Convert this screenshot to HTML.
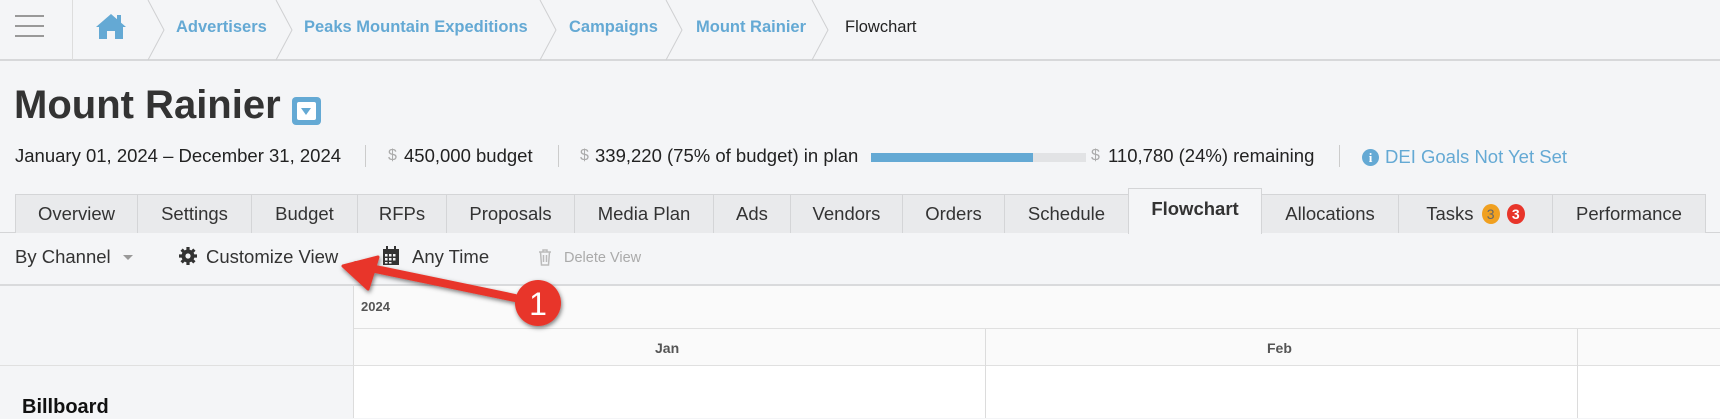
<!DOCTYPE html>
<html><head><meta charset="utf-8"><style>
*{margin:0;padding:0;box-sizing:border-box}
body{width:1720px;height:418px;overflow:hidden;background:#f4f5f7;font-family:"Liberation Sans",sans-serif;color:#333;position:relative}
.a{position:absolute;white-space:nowrap}
.bc{font-size:16.5px;font-weight:bold;color:#64a9d4;top:18px}
.tab{position:absolute;top:194px;height:39px;background:#e9eaec;border:1px solid #d4d5d7;border-bottom:none;font-size:18.5px;color:#333;text-align:center;line-height:38px}
.i{font-size:18.5px;color:#222;top:145px}
</style></head><body>
<div class="a" style="left:0;top:0;width:1720px;height:61px;border-bottom:2px solid #d7d8da"></div>
<div class="a" style="left:15px;top:15px;width:29px;height:2px;background:#999"></div>
<div class="a" style="left:15px;top:25px;width:29px;height:2px;background:#999"></div>
<div class="a" style="left:15px;top:35px;width:29px;height:2px;background:#999"></div>
<div class="a" style="left:72px;top:0;width:1px;height:60px;background:#ddd"></div>
<svg class="a" style="left:95px;top:12px" width="32" height="28" viewBox="0 0 32 28"><path d="M16 2 L1 15 L4 15 L4 27 L12 27 L12 19 L20 19 L20 27 L28 27 L28 15 L31 15 Z" fill="#64a9d4"/><rect x="22" y="3" width="4" height="8" fill="#64a9d4"/></svg>
<svg class="a" style="left:0;top:0" width="900" height="61">
<g fill="none" stroke="#cfd0d2" stroke-width="1">
<path d="M148 0 L164 30 L148 60"/><path d="M276 0 L292 30 L276 60"/><path d="M540 0 L556 30 L540 60"/><path d="M666 0 L682 30 L666 60"/><path d="M812 0 L828 30 L812 60"/>
</g></svg>
<div class="a bc" style="left:176px">Advertisers</div>
<div class="a bc" style="left:304px">Peaks Mountain Expeditions</div>
<div class="a bc" style="left:569px">Campaigns</div>
<div class="a bc" style="left:696px">Mount Rainier</div>
<div class="a" style="left:845px;top:18px;font-size:16.5px;color:#222">Flowchart</div>
<div class="a" style="left:14px;top:83px;font-size:40px;font-weight:bold;color:#333">Mount Rainier</div>
<div class="a" style="left:292px;top:97px;width:29px;height:28px;background:#64a9d4;border-radius:4px"><div style="position:absolute;left:5px;top:5px;width:19px;height:18px;background:#fff;border-radius:2px"></div><div style="position:absolute;left:9px;top:11px;border-left:5.5px solid transparent;border-right:5.5px solid transparent;border-top:7px solid #64a9d4"></div></div>
<div class="a i" style="left:15px">January 01, 2024 – December 31, 2024</div>
<div class="a" style="left:365px;top:145px;width:1px;height:22px;background:#ccc"></div>
<div class="a" style="left:388px;top:147px;font-size:16px;color:#aaa">$</div>
<div class="a i" style="left:404px">450,000 budget</div>
<div class="a" style="left:558px;top:145px;width:1px;height:22px;background:#ccc"></div>
<div class="a" style="left:580px;top:147px;font-size:16px;color:#aaa">$</div>
<div class="a i" style="left:595px">339,220 (75% of budget) in plan</div>
<div class="a" style="left:871px;top:153px;width:215px;height:9px;background:#e2e3e5"><div style="width:162px;height:9px;background:#64a9d4"></div></div>
<div class="a" style="left:1091px;top:147px;font-size:16px;color:#aaa">$</div>
<div class="a i" style="left:1108px">110,780 (24%) remaining</div>
<div class="a" style="left:1339px;top:145px;width:1px;height:22px;background:#ccc"></div>
<div class="a" style="left:1362px;top:149px;width:17px;height:17px;border-radius:50%;background:#64a9d4;color:#fff;font-size:13px;font-weight:bold;text-align:center;line-height:17px;font-family:'Liberation Serif',serif">i</div>
<div class="a i" style="left:1385px;color:#64a9d4;top:146px">DEI Goals Not Yet Set</div>
<div class="a" style="left:0;top:232px;width:1720px;height:1px;background:#d4d5d7"></div>
<div class="tab" style="left:15px;width:123px">Overview</div>
<div class="tab" style="left:137px;width:115px">Settings</div>
<div class="tab" style="left:251px;width:107px">Budget</div>
<div class="tab" style="left:357px;width:90px">RFPs</div>
<div class="tab" style="left:446px;width:129px">Proposals</div>
<div class="tab" style="left:574px;width:140px">Media Plan</div>
<div class="tab" style="left:713px;width:78px">Ads</div>
<div class="tab" style="left:790px;width:113px">Vendors</div>
<div class="tab" style="left:902px;width:103px">Orders</div>
<div class="tab" style="left:1004px;width:125px">Schedule</div>
<div class="tab" style="left:1128px;top:188px;height:46px;width:134px;background:#f4f5f7;font-weight:bold;line-height:40px">Flowchart</div>
<div class="tab" style="left:1261px;width:138px">Allocations</div>
<div class="tab" style="left:1398px;width:155px">Tasks <span style="display:inline-block;width:18px;height:20px;border-radius:50%;background:#f0a020;color:#666;font-size:14px;line-height:20px;vertical-align:1px;margin-left:3px">3</span> <span style="display:inline-block;width:18px;height:20px;border-radius:50%;background:#e8352a;color:#fff;font-size:14px;font-weight:bold;line-height:20px;vertical-align:1px;margin-left:2px">3</span></div>
<div class="tab" style="left:1552px;width:154px">Performance</div>
<div class="a" style="left:15px;top:246px;font-size:18.5px;color:#333">By Channel</div>
<div class="a" style="left:123px;top:255px;border-left:5px solid transparent;border-right:5px solid transparent;border-top:5px solid #999"></div>
<svg class="a" style="left:178px;top:246px" width="20" height="20" viewBox="0 0 20 20"><g fill="#333"><circle cx="10" cy="10" r="6.5"/><g stroke="#333" stroke-width="3.2"><path d="M10 1v18M1 10h18M3.6 3.6l12.8 12.8M16.4 3.6L3.6 16.4"/></g></g><circle cx="10" cy="10" r="2.6" fill="#f4f5f7"/></svg>
<div class="a" style="left:206px;top:246px;font-size:18.5px;color:#333">Customize View</div>
<svg class="a" style="left:382px;top:246px" width="18" height="20" viewBox="0 0 18 20"><rect x="1" y="3" width="16" height="16" fill="#333"/><rect x="4" y="0" width="2" height="5" fill="#333"/><rect x="12" y="0" width="2" height="5" fill="#333"/><g fill="#f4f5f7"><rect x="3" y="8" width="2.5" height="2.5"/><rect x="7" y="8" width="2.5" height="2.5"/><rect x="11" y="8" width="2.5" height="2.5"/><rect x="3" y="12" width="2.5" height="2.5"/><rect x="7" y="12" width="2.5" height="2.5"/><rect x="11" y="12" width="2.5" height="2.5"/><rect x="3" y="16" width="2.5" height="1.5"/><rect x="7" y="16" width="2.5" height="1.5"/></g></svg>
<div class="a" style="left:412px;top:246px;font-size:18.5px;color:#333">Any Time</div>
<svg class="a" style="left:538px;top:249px" width="14" height="17" viewBox="0 0 14 17"><g fill="none" stroke="#bbb" stroke-width="1.5"><path d="M1 3h12M5 3V1h4v2M2.5 3l1 13h7l1-13M5.5 6v7M8.5 6v7"/></g></svg>
<div class="a" style="left:564px;top:250px;font-size:14.5px;color:#aaa">Delete View</div>
<div class="a" style="left:0;top:284px;width:1720px;height:2px;background:#d9dadc"></div>
<div class="a" style="left:353px;top:286px;width:1367px;height:132px;background:#fafafa;border-left:1px solid #dcdcdc"></div>
<div class="a" style="left:354px;top:328px;width:1366px;height:1px;background:#e0e0e0"></div>
<div class="a" style="left:0;top:365px;width:1720px;height:1px;background:#e0e0e0"></div>
<div class="a" style="left:354px;top:366px;width:1366px;height:52px;background:#fff"></div>
<div class="a" style="left:985px;top:329px;width:1px;height:89px;background:#dcdcdc"></div>
<div class="a" style="left:1577px;top:329px;width:1px;height:89px;background:#dcdcdc"></div>
<div class="a" style="left:361px;top:299px;font-size:13px;font-weight:bold;color:#555">2024</div>
<div class="a" style="left:655px;top:340px;font-size:14px;font-weight:bold;color:#555">Jan</div>
<div class="a" style="left:1267px;top:340px;font-size:14px;font-weight:bold;color:#555">Feb</div>
<div class="a" style="left:22px;top:396px;font-size:20px;font-weight:bold;color:#111">Billboard</div>
<svg class="a" style="left:0;top:0" width="1720" height="418">
<defs><filter id="s" x="-50%" y="-50%" width="200%" height="200%"><feDropShadow dx="1" dy="2" stdDeviation="2" flood-color="#000" flood-opacity="0.5"/></filter></defs>
<g filter="url(#s)">
<path d="M515 298 L356 265" stroke="#e8352a" stroke-width="8" stroke-linecap="round"/>
<path d="M343 266 L378 257 L368 289 Z" fill="#e8352a" stroke="#e8352a" stroke-width="3" stroke-linejoin="round"/>
<circle cx="538" cy="303" r="23" fill="#e8352a"/>
</g>
<text x="538" y="315" text-anchor="middle" font-family="Liberation Sans" font-size="32" fill="#fff">1</text>
</svg>
</body></html>
